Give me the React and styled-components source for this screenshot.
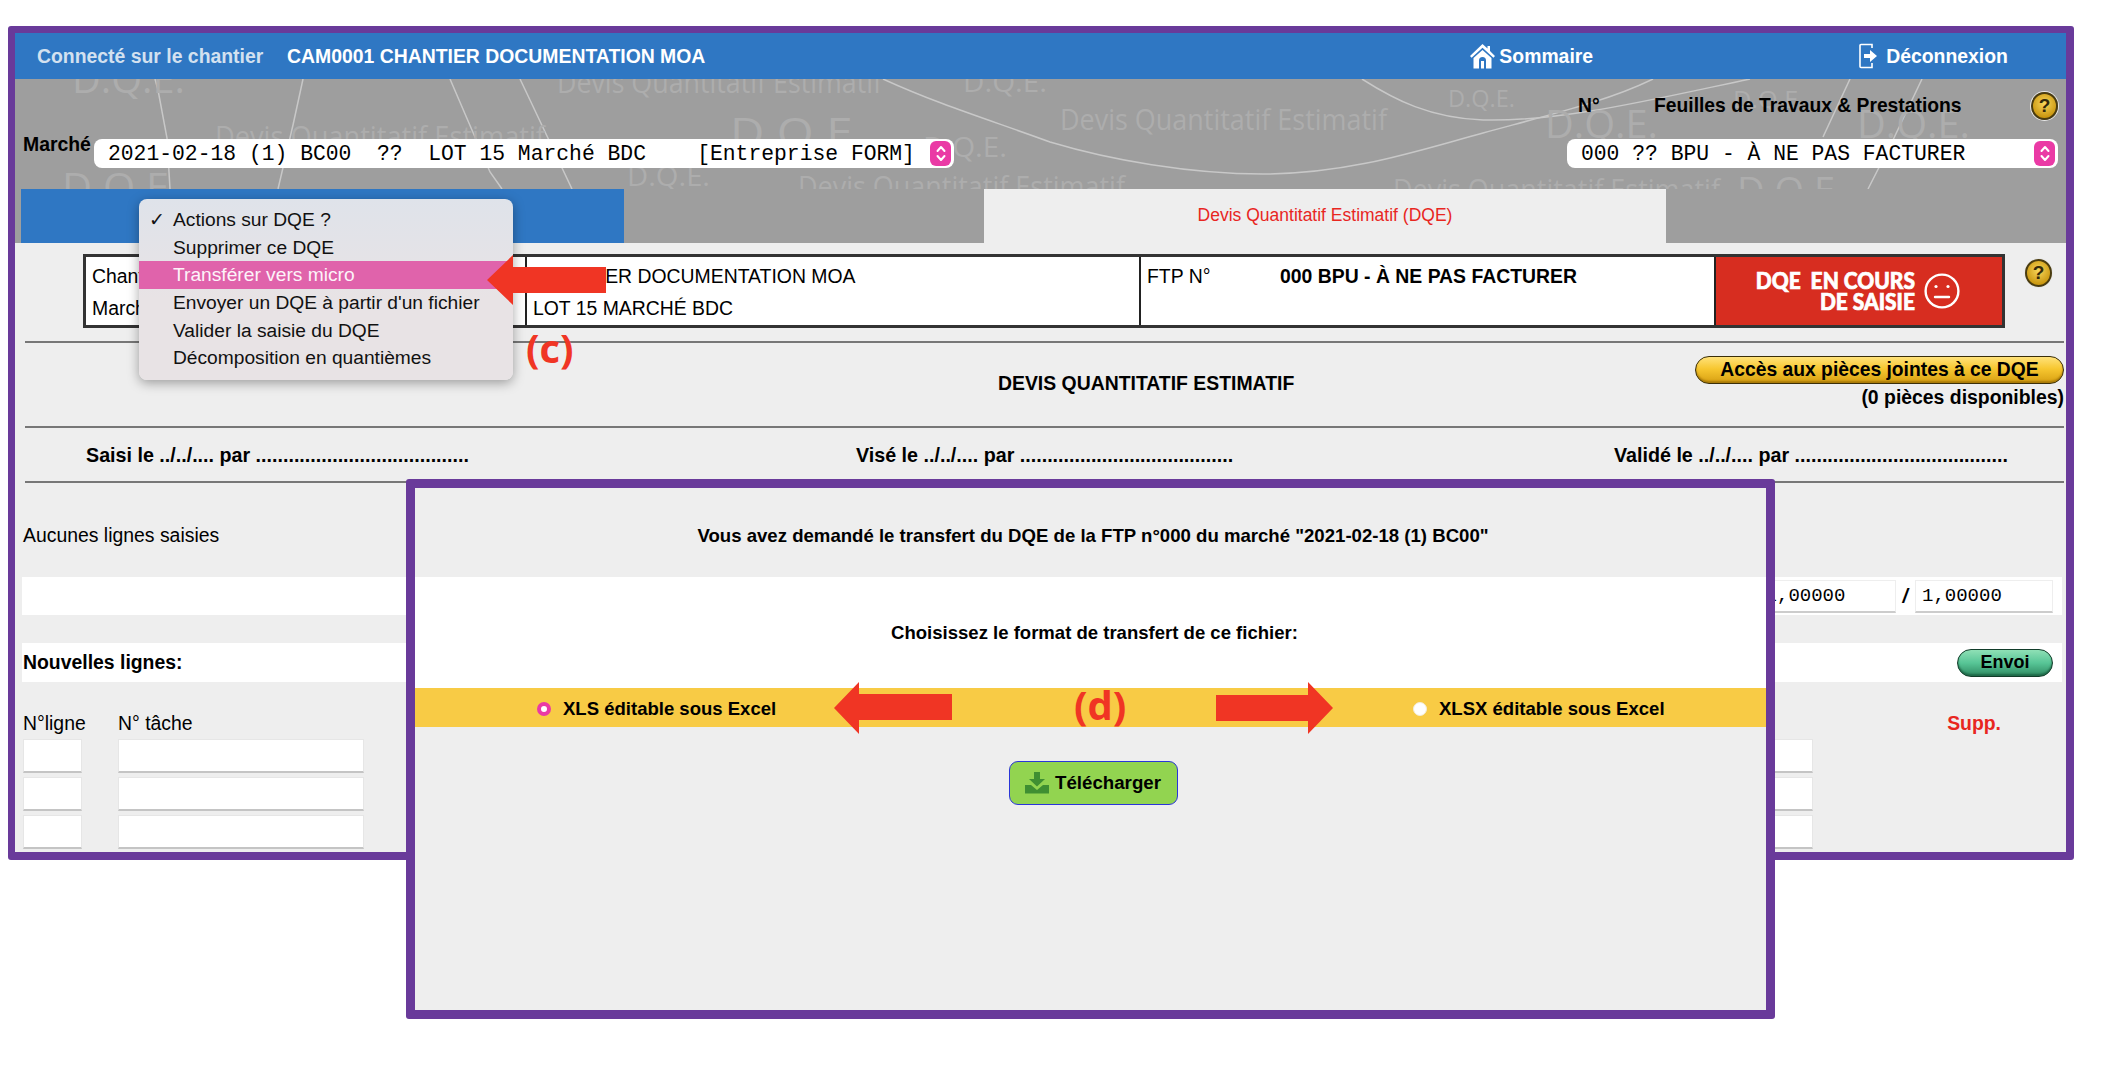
import React from 'react'
import styled, { createGlobalStyle } from 'styled-components'

const GlobalStyle = createGlobalStyle`
  html, body { margin: 0; padding: 0; background: #fff; }
  body { font-family: "Liberation Sans", Arial, sans-serif; color: #000; }
`

const Page = styled.div`
  position: relative;
  width: 2102px;
  height: 1078px;
  overflow: hidden;
  background: #fff;
  padding: 26px 0 0 8px;
  box-sizing: border-box;
`

const Frame = styled.section`
  width: 2066px;
  height: 834px;
  box-sizing: border-box;
  border: 8px solid #693a9a;
  border-width: 7px 8px 8px 7px;
  border-radius: 3px;
  display: flex;
  flex-direction: column;
  overflow: hidden;
  background: #eee;
`

const TopBar = styled.header`
  flex: 0 0 46px;
  display: flex;
  align-items: center;
  background: #2f77c3;
  padding-left: 22px;
  font-size: 19.4px;
  font-weight: 700;
  color: #fff;
`
const Muted = styled.span`
  color: #d3e1f0;
  width: 250px;
`
const NavLink = styled.span`
  display: flex;
  align-items: center;
  gap: ${(p) => p.$gap}px;
  margin-left: ${(p) => p.$left}px;
`

const HeaderBand = styled.div`
  position: relative;
  flex: 0 0 110px;
  box-sizing: border-box;
  background: #9e9e9e;
  overflow: hidden;
  display: flex;
  justify-content: space-between;
  align-items: flex-end;
  padding: 0 8px 21px;
`
const Watermark = styled.svg`
  position: absolute;
  left: 0;
  top: 0;
`
const MarketBlock = styled.div`
  position: relative;
  display: flex;
  align-items: flex-start;
`
const BandLabel = styled.span`
  width: 71px;
  font-size: 19.4px;
  font-weight: 700;
  line-height: 20px;
`
const SelectBox = styled.div`
  width: ${(p) => p.$width}px;
  height: 29px;
  margin-top: ${(p) => p.$top || 0}px;
  box-sizing: border-box;
  display: flex;
  align-items: center;
  justify-content: space-between;
  padding: 0 3px 0 14px;
  background: #fff;
  border-radius: 8px;
  font-family: "Liberation Mono", "Courier New", monospace;
  font-size: 21.35px;
  white-space: pre;
`
const Stepper = styled.span`
  width: 21px;
  height: 25px;
  border-radius: 6px;
  background: #ea3aa5;
  display: flex;
  align-items: center;
  justify-content: center;
`
const SheetBlock = styled.div`
  position: relative;
  width: 491px;
  display: flex;
  flex-direction: column;
  gap: 19px;
`
const SheetTitle = styled.div`
  height: 29px;
  display: flex;
  align-items: center;
  padding-left: 11px;
  font-size: 19.3px;
  font-weight: 700;
`
const SheetNo = styled.span`
  width: 76px;
`
const HelpBadge = styled.span`
  width: 27px;
  height: 28px;
  box-sizing: border-box;
  margin-left: ${(p) => p.$left || 'auto'};
  margin-top: ${(p) => p.$top || 0}px;
  flex: none;
  border-radius: 50%;
  border: 2px solid #4a3c10;
  background: radial-gradient(circle at 50% 40%, #f8d65a, #c9960f 75%);
  box-shadow: 0 0 0 1px #e8e8e8;
  color: #33290a;
  font-size: 19px;
  font-weight: 700;
  display: flex;
  align-items: center;
  justify-content: center;
`

const TabsRow = styled.nav`
  flex: 0 0 54px;
  display: flex;
  background: #9e9e9e;
  padding-left: 6px;
`
const BlueTab = styled.div`
  width: 603px;
  background: #2f77c3;
`
const ActiveTab = styled.div`
  width: 682px;
  margin-left: 360px;
  background: #eee;
  color: #e8261f;
  font-size: 17.5px;
  display: flex;
  align-items: center;
  justify-content: center;
  padding-bottom: 1px;
  box-sizing: border-box;
`

const Content = styled.main`
  flex: 1;
  background: #eee;
  overflow: hidden;
  font-size: 19.4px;
`
const InfoRow = styled.div`
  display: flex;
  align-items: flex-start;
  margin: 11px 0 0 68px;
`
const InfoTable = styled.div`
  width: 1922px;
  height: 74px;
  box-sizing: border-box;
  border: 3px solid #333;
  display: grid;
  grid-template-columns: 441px 614px 575px 1fr;
  background: #fff;
`
const InfoCell = styled.div`
  box-sizing: border-box;
  border-right: 2px solid #222;
  padding: 3px 0 0 6px;
  line-height: 32px;
  white-space: nowrap;
`
const FtpLine = styled.div`
  display: flex;
`
const FtpLabel = styled.span`
  width: 133px;
`
const StatusCell = styled.div`
  background: #d72d20;
  color: #fff;
  display: flex;
  align-items: center;
  justify-content: flex-end;
  gap: 9px;
  padding-right: 42px;
`
const StatusText = styled.div`
  font-family: Lato, "Liberation Sans", sans-serif;
  font-weight: 900;
  font-size: 23px;
  line-height: 21px;
  text-align: right;
  white-space: pre;
  -webkit-text-stroke: 0.7px #fff;
  transform: scaleX(0.91);
  transform-origin: right center;
`
const Divider = styled.hr`
  height: 2px;
  margin: ${(p) => p.$top || 0}px 2px 0 10px;
  border: 0;
  background: #777;
`
const TitleRow = styled.div`
  height: 83px;
  display: flex;
  padding: 0 2px 0 983px;
`
const DocTitle = styled.div`
  font-weight: 700;
  margin-top: 29px;
`
const AttachBlock = styled.div`
  margin: 13px 0 0 auto;
  width: 369px;
  text-align: right;
  font-weight: 700;
  white-space: nowrap;
`
const GoldButton = styled.button`
  display: block;
  width: 100%;
  height: 28px;
  padding: 0;
  border: 1px solid #3b2f08;
  border-radius: 14px;
  background: linear-gradient(#ffe27a 0%, #f7c730 45%, #d79f12 100%);
  box-shadow: inset 0 -2px 2px #a87a08;
  font: 700 19.3px "Liberation Sans", Arial, sans-serif;
  margin-bottom: 2px;
`
const SignRow = styled.div`
  height: 53px;
  display: grid;
  grid-template-columns: 770px 758px 1fr;
  align-items: center;
  padding: 2px 0 0 71px;
  box-sizing: border-box;
  font-size: 19.7px;
  font-weight: 700;
  white-space: nowrap;
`
const EmptyNote = styled.div`
  height: 94px;
  display: flex;
  align-items: center;
  padding: 10px 0 0 8px;
  box-sizing: border-box;
`
const WhiteBand = styled.div`
  height: ${(p) => p.$height}px;
  margin: ${(p) => p.$top || 0}px 4px 0 7px;
  background: #fff;
  display: flex;
  align-items: center;
  justify-content: ${(p) => p.$justify || 'flex-start'};
  font-weight: ${(p) => p.$bold ? 700 : 400};
  padding-right: 9px;
`
const BandHeading = styled.span`
  margin-left: 1px;
  margin-right: auto;
`
const AmountInput = styled.div`
  width: ${(p) => p.$width}px;
  height: 33px;
  box-sizing: border-box;
  background: #fff;
  border: 1px solid #eee;
  border-bottom: 2px solid #ccc;
  font-family: "Liberation Mono", "Courier New", monospace;
  font-size: 19px;
  line-height: 31px;
  padding-left: 6px;
`
const Slash = styled.span`
  margin: 0 7px;
  font-weight: 700;
  font-style: italic;
`
const EnvoiButton = styled.button`
  width: 96px;
  height: 28px;
  padding: 0;
  border: 1px solid #123d2a;
  border-radius: 14px;
  background: linear-gradient(#8fe0b6 0%, #57c596 50%, #2f8a62 100%);
  box-shadow: inset 0 -2px 2px #1f6a49;
  font: 700 18px "Liberation Sans", Arial, sans-serif;
`
const ColumnsHead = styled.div`
  height: 57px;
  display: flex;
  align-items: flex-start;
  padding: 30px 65px 0 8px;
  box-sizing: border-box;
`
const ColLine = styled.span`
  width: 95px;
`
const SuppLabel = styled.span`
  margin-left: auto;
  color: #e8261f;
  font-weight: 700;
`
const EntryRows = styled.div`
  display: flex;
  flex-direction: column;
  gap: 4px;
  padding: 0 253px 0 8px;
`
const EntryRow = styled.div`
  display: flex;
  justify-content: space-between;
`
const EntryLeft = styled.div`
  display: flex;
  gap: 36px;
`
const EntryInput = styled.div`
  width: ${(p) => p.$width}px;
  height: 34px;
  box-sizing: border-box;
  background: #fff;
  border: 1px solid #e6e6e6;
  border-bottom: 2px solid #c4c4c4;
`

/* fenêtre de transfert posée par-dessus la page */
const Modal = styled.section`
  position: absolute;
  left: 406px;
  top: 479px;
  width: 1369px;
  height: 540px;
  box-sizing: border-box;
  border: 9px solid #693a9a;
  border-radius: 3px;
  background: #eee;
  display: flex;
  flex-direction: column;
`
const ModalHead = styled.div`
  height: 89px;
  box-sizing: border-box;
  display: flex;
  align-items: center;
  justify-content: center;
  font-size: 18.6px;
  font-weight: 700;
  padding: 7px 0 0 5px;
`
const ModalChoice = styled.div`
  height: 111px;
  box-sizing: border-box;
  background: #fff;
  display: flex;
  align-items: center;
  justify-content: center;
  font-size: 18.55px;
  font-weight: 700;
  padding: 1px 0 0 8px;
`
const FormatBand = styled.div`
  height: 39px;
  box-sizing: border-box;
  background: #f8cb45;
  display: grid;
  grid-template-columns: 876px 1fr;
  align-items: center;
  padding: 2px 0 0 122px;
  font-size: 18.55px;
  font-weight: 700;
  white-space: nowrap;
`
const FormatOption = styled.label`
  display: flex;
  align-items: center;
  gap: 12px;
`
const Radio = styled.span`
  width: 14px;
  height: 14px;
  box-sizing: border-box;
  border-radius: 50%;
  background: #fff;
  border: ${(p) => p.$on ? '4px solid #ea3aa5' : '1px solid #f3ecd8'};
`
const ModalAction = styled.div`
  display: flex;
  justify-content: center;
  padding: 34px 0 0 5px;
`
const DownloadButton = styled.button`
  width: 169px;
  height: 44px;
  display: flex;
  align-items: center;
  justify-content: center;
  gap: 6px;
  padding: 0;
  background: #92d450;
  border: 1px solid #2a35d8;
  border-radius: 9px;
  font: 700 18.7px "Liberation Sans", Arial, sans-serif;
  color: #000;
`

/* menu déroulant ouvert */
const ActionMenu = styled.ul`
  position: absolute;
  left: 139px;
  top: 199px;
  width: 374px;
  height: 181px;
  box-sizing: border-box;
  margin: 0;
  padding: 7px 0 0;
  list-style: none;
  border-radius: 8px;
  background: linear-gradient(#dfe3ea, #e8e3e5 55%);
  box-shadow: 0 3px 12px rgba(0, 0, 0, 0.35);
  font-size: 19.2px;
  color: #111;
`
const MenuItem = styled.li`
  position: relative;
  height: 27.7px;
  line-height: 27.7px;
  padding-left: 34px;
  white-space: nowrap;
  background: ${(p) => p.$active ? '#e063ab' : 'transparent'};
  color: ${(p) => p.$active ? '#fdf3f9' : 'inherit'};
`
const MenuCheck = styled.span`
  position: absolute;
  left: 10px;
  font-size: 19px;
  font-weight: 700;
  font-family: "DejaVu Sans", sans-serif;
`

const Arrow = styled.svg`
  position: absolute;
  left: ${(p) => p.$x}px;
  top: ${(p) => p.$y}px;
`
const Callout = styled.span`
  position: absolute;
  left: ${(p) => p.$x}px;
  top: ${(p) => p.$y}px;
  color: #f03524;
  font-family: "Open Sans", sans-serif;
  font-weight: 700;
  font-size: 40px;
  line-height: 44px;
`

const Mark = styled.text`
  fill: #adadad;
  font-family: "Open Sans", "Liberation Sans", sans-serif;
`

const marks = [
  ['D.Q.E.', 72, 93, 38, 113],
  ['Devis Quantitatif Estimatif', 215, 147, 30, 330],
  ['D.Q.E.', 62, 201, 38, 118],
  ['Devis Quantitatif Estimatif', 557, 93, 30, 325],
  ['D.Q.E.', 963, 92, 28, 84],
  ['D.Q.E.', 730, 147, 40, 135],
  ['D.Q.E.', 923, 157, 28, 84],
  ['D.Q.E.', 627, 186, 28, 83],
  ['Devis Quantitatif Estimatif', 798, 197, 30, 327],
  ['Devis Quantitatif Estimatif', 1060, 130, 30, 327],
  ['D.Q.E.', 1448, 107, 23, 67],
  ['D.Q.E.', 1545, 138, 38, 113],
  ['D.Q.E.', 1857, 138, 38, 113],
  ['D.Q.E.', 1733, 108, 24, 72],
  ['Devis Quantitatif Estimatif', 1393, 200, 30, 327],
  ['D.Q.E.', 1737, 203, 36, 108],
]

const curves = [
  'M155 79 L158 90 L167 138 L170 189',
  'M303 79 L293 125 L278 189',
  'M450 79 L490 172 L502 189',
  'M520 79 L530 100 L572 189',
  'M883 79 C940 105 990 120 1050 142 C1110 160 1190 174 1263 174 C1350 174 1420 150 1483 133 C1560 112 1610 100 1653 79',
  'M1362 79 C1395 100 1430 118 1483 120 C1560 122 1650 100 1750 79',
  'M1850 79 L1823 137',
  'M1922 79 L1893 140 L1868 189',
]

const rows = [0, 1, 2]

function HomeIcon() {
  return (
    <svg width="25" height="26" viewBox="0 0 25 26">
      <path d="M12.5 1 L17.5 5.5 V3 H20 V8 L25 13 L23.4 14.8 L12.5 4.8 L1.6 14.8 L0 13 Z" fill="#fff" />
      <path d="M3.5 15 L12.5 7 L21.5 15 V25.5 H16 V17.5 A3.5 3.5 0 0 0 9 17.5 V25.5 H3.5 Z" fill="#fff" />
      <rect x="11" y="18" width="3" height="7.5" fill="#fff" />
    </svg>
  )
}

function LogoutIcon() {
  return (
    <svg width="19" height="26" viewBox="0 0 19 26">
      <path d="M13 5 V1.5 H2 A1 1 0 0 0 1 2.5 V23.5 A1 1 0 0 0 2 24.5 H13 V20" fill="none" stroke="#fff" strokeWidth="1.6" />
      <path d="M5 11 H11 V7 L18 13 L11 19 V15 H5 Z" fill="#fff" />
    </svg>
  )
}

function Chevrons() {
  return (
    <svg width="12" height="19" viewBox="0 0 12 19" fill="none" stroke="#fff" strokeWidth="2" strokeLinecap="round" strokeLinejoin="round">
      <path d="M2.5 7 L6 3 L9.5 7" />
      <path d="M2.5 12 L6 16 L9.5 12" />
    </svg>
  )
}

function Smiley() {
  return (
    <svg width="36" height="36" viewBox="0 0 36 36" fill="none" stroke="#fff" strokeWidth="2.4">
      <circle cx="18" cy="18" r="16.4" />
      <circle cx="12" cy="13.5" r="1.6" fill="#fff" stroke="none" />
      <circle cx="24" cy="13.5" r="1.6" fill="#fff" stroke="none" />
      <path d="M11 24 H25" strokeLinecap="round" />
    </svg>
  )
}

function DownloadIcon() {
  return (
    <svg width="24" height="22" viewBox="0 0 24 22" fill="#3f8f32">
      <path d="M9 0 H15 V7 H20 L12 14.5 L4 7 H9 Z" />
      <path d="M0 13 H6 L12 18 L18 13 H24 V21.5 H0 Z" />
    </svg>
  )
}

export default function App() {
  return (
    <Page>
      <GlobalStyle />
      <Frame>
        <TopBar>
          <Muted>Connecté sur le chantier</Muted>
          <span>CAM0001 CHANTIER DOCUMENTATION MOA</span>
          <NavLink $left={765} $gap={4}><HomeIcon />Sommaire</NavLink>
          <NavLink $left={266} $gap={8}><LogoutIcon />Déconnexion</NavLink>
        </TopBar>

        <HeaderBand>
          <Watermark width="2050" height="110" viewBox="15 79 2050 110">
            {curves.map((d) => (
              <path key={d} d={d} fill="none" stroke="#c8c8c8" strokeWidth="1.5" />
            ))}
            {marks.map(([label, x, y, size, len]) => (
              <Mark key={`${label}${x}`} x={x} y={y} fontSize={size} textLength={len} lengthAdjust="spacingAndGlyphs">{label}</Mark>
            ))}
          </Watermark>
          <MarketBlock>
            <BandLabel>Marché</BandLabel>
            <SelectBox $width={860} $top={5}>
              {'2021-02-18 (1) BC00  ??  LOT 15 Marché BDC    [Entreprise FORM]'}
              <Stepper><Chevrons /></Stepper>
            </SelectBox>
          </MarketBlock>
          <SheetBlock>
            <SheetTitle>
              <SheetNo>N°</SheetNo>
              Feuilles de Travaux &amp; Prestations
              <HelpBadge>?</HelpBadge>
            </SheetTitle>
            <SelectBox $width={491}>
              {'000 ?? BPU - À NE PAS FACTURER'}
              <Stepper><Chevrons /></Stepper>
            </SelectBox>
          </SheetBlock>
        </HeaderBand>

        <TabsRow>
          <BlueTab />
          <ActiveTab>Devis Quantitatif Estimatif (DQE)</ActiveTab>
        </TabsRow>

        <Content>
          <InfoRow>
            <InfoTable>
              <InfoCell>Chantier<br />Marché</InfoCell>
              <InfoCell>CHANTIER DOCUMENTATION MOA<br />LOT 15 MARCHÉ BDC</InfoCell>
              <InfoCell>
                <FtpLine>
                  <FtpLabel>FTP N°</FtpLabel>
                  <b>000 BPU - À NE PAS FACTURER</b>
                </FtpLine>
              </InfoCell>
              <StatusCell>
                <StatusText>{'DQE  EN COURS\nDE SAISIE'}</StatusText>
                <Smiley />
              </StatusCell>
            </InfoTable>
            <HelpBadge $left="20px" $top={5}>?</HelpBadge>
          </InfoRow>
          <Divider $top={13} />
          <TitleRow>
            <DocTitle>DEVIS QUANTITATIF ESTIMATIF</DocTitle>
            <AttachBlock>
              <GoldButton>Accès aux pièces jointes à ce DQE</GoldButton>
              (0 pièces disponibles)
            </AttachBlock>
          </TitleRow>
          <Divider />
          <SignRow>
            <span>Saisi le ../../.... par .......................................</span>
            <span>Visé le ../../.... par .......................................</span>
            <span>Validé le ../../.... par .......................................</span>
          </SignRow>
          <Divider />
          <EmptyNote>Aucunes lignes saisies</EmptyNote>
          <WhiteBand $height={38} $justify="flex-end">
            <AmountInput $width={137}>1,00000</AmountInput>
            <Slash>/</Slash>
            <AmountInput $width={138}>1,00000</AmountInput>
          </WhiteBand>
          <WhiteBand $height={39} $top={28} $bold>
            <BandHeading>Nouvelles lignes:</BandHeading>
            <EnvoiButton>Envoi</EnvoiButton>
          </WhiteBand>
          <ColumnsHead>
            <ColLine>N°ligne</ColLine>
            <span>N° tâche</span>
            <SuppLabel>Supp.</SuppLabel>
          </ColumnsHead>
          <EntryRows>
            {rows.map((r) => (
              <EntryRow key={r}>
                <EntryLeft>
                  <EntryInput $width={59} />
                  <EntryInput $width={246} />
                </EntryLeft>
                <EntryInput $width={200} />
              </EntryRow>
            ))}
          </EntryRows>
        </Content>
      </Frame>

      <ActionMenu>
        <MenuItem><MenuCheck>✓</MenuCheck>Actions sur DQE ?</MenuItem>
        <MenuItem>Supprimer ce DQE</MenuItem>
        <MenuItem $active>Transférer vers micro</MenuItem>
        <MenuItem>Envoyer un DQE à partir d'un fichier</MenuItem>
        <MenuItem>Valider la saisie du DQE</MenuItem>
        <MenuItem>Décomposition en quantièmes</MenuItem>
      </ActionMenu>

      <Modal>
        <ModalHead>Vous avez demandé le transfert du DQE de la FTP n°000 du marché "2021-02-18 (1) BC00"</ModalHead>
        <ModalChoice>Choisissez le format de transfert de ce fichier:</ModalChoice>
        <FormatBand>
          <FormatOption><Radio $on />XLS éditable sous Excel</FormatOption>
          <FormatOption><Radio />XLSX éditable sous Excel</FormatOption>
        </FormatBand>
        <ModalAction>
          <DownloadButton><DownloadIcon />Télécharger</DownloadButton>
        </ModalAction>
      </Modal>

      <Arrow $x={487} $y={255} width="119" height="50" viewBox="0 0 119 50">
        <path d="M0 25 L26 0 V12 H119 V38 H26 V50 Z" fill="#f03524" />
      </Arrow>
      <Callout $x={526} $y={326}>(c)</Callout>
      <Arrow $x={834} $y={682} width="118" height="52" viewBox="0 0 118 52">
        <path d="M0 26 L25 0 V12 H118 V38 H25 V52 Z" fill="#f03524" />
      </Arrow>
      <Callout $x={1074} $y={683}>(d)</Callout>
      <Arrow $x={1216} $y={682} width="117" height="52" viewBox="0 0 117 52">
        <path d="M117 26 L92 0 V13 H0 V39 H92 V52 Z" fill="#f03524" />
      </Arrow>
    </Page>
  )
}
